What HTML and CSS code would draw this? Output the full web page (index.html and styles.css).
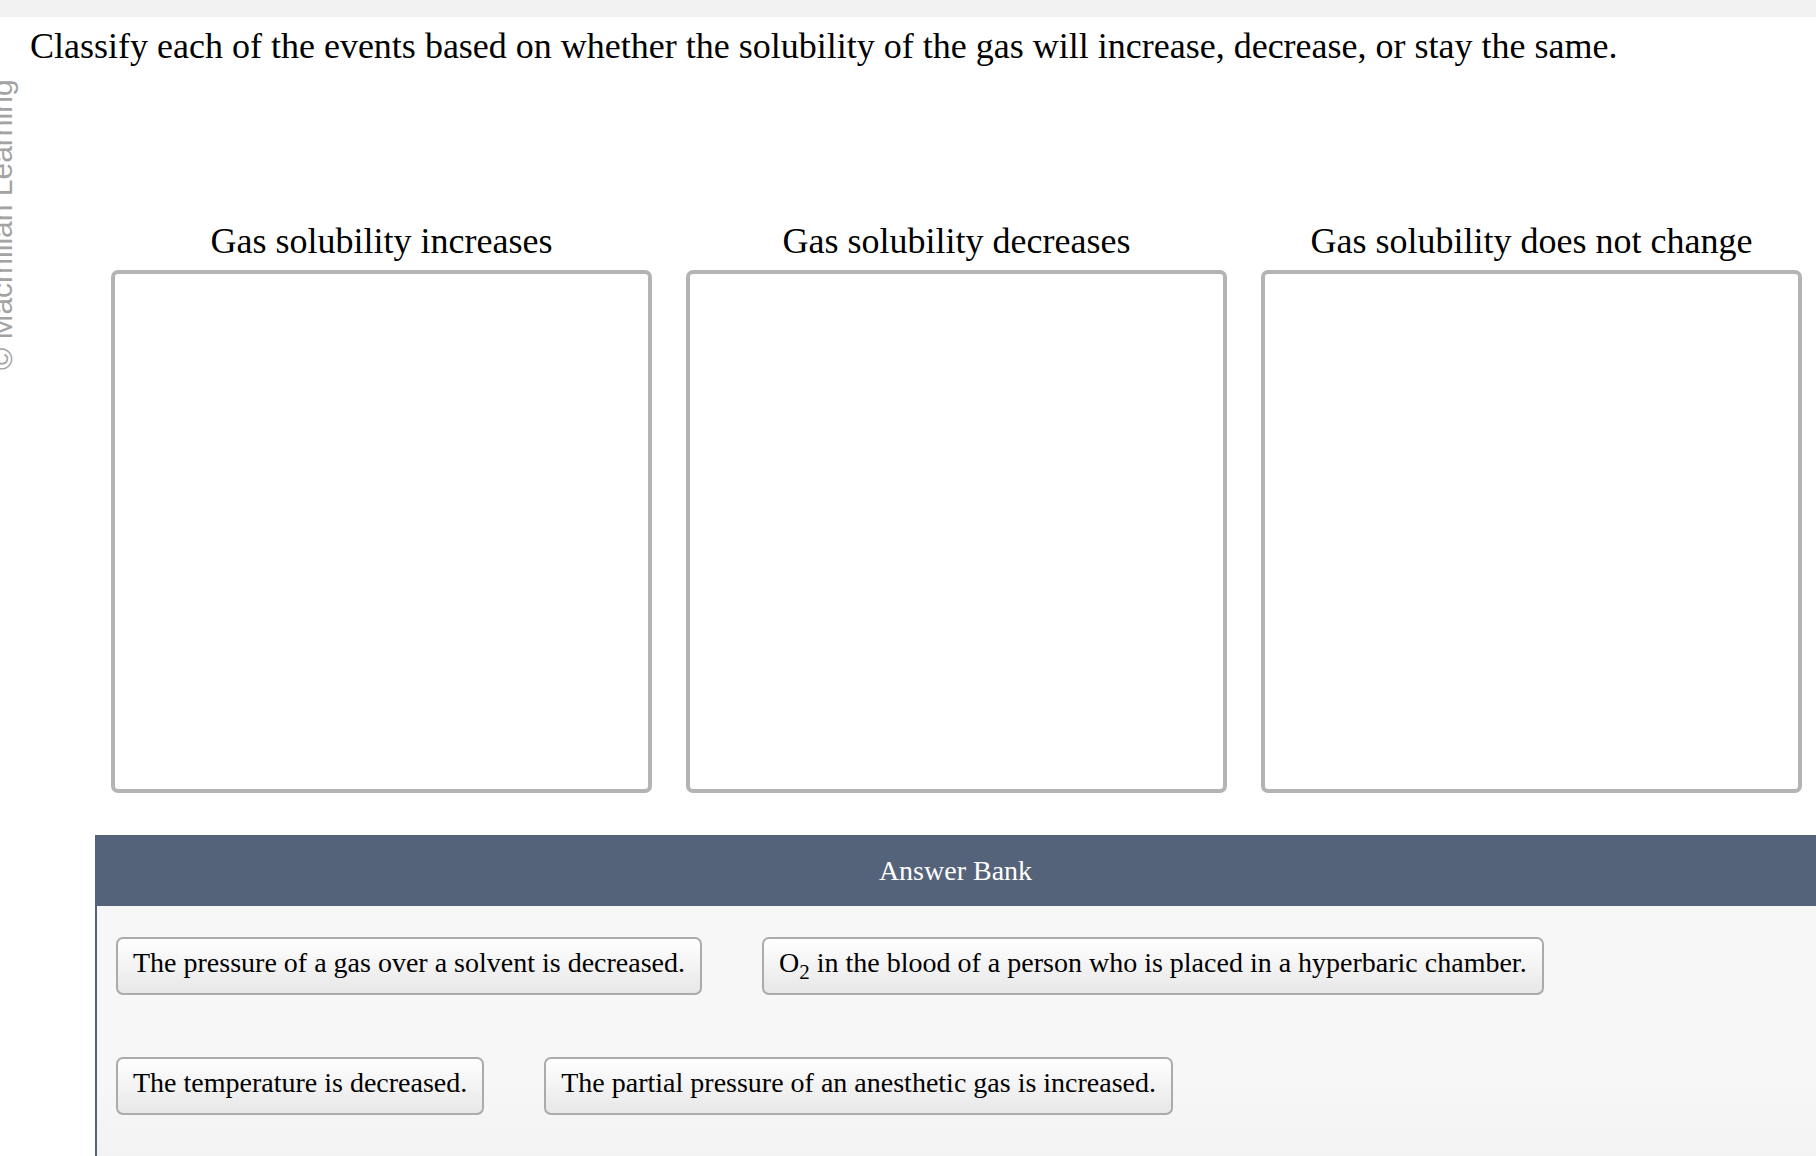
FILE: index.html
```html
<!DOCTYPE html>
<html lang="en">
<head>
<meta charset="utf-8">
<title>Gas solubility classification</title>
<link rel="stylesheet" href="styles.css">
</head>
<body>
<div class="topbar"></div>
<div class="watermark">© Macmillan Learning</div>
<main class="page">
  <h1 class="prompt">Classify each of the events based on whether the solubility of the gas will increase, decrease, or stay the same.</h1>
  <section class="bins">
    <div class="bin">
      <div class="bin-label">Gas solubility increases</div>
      <div class="bin-box"></div>
    </div>
    <div class="bin">
      <div class="bin-label">Gas solubility decreases</div>
      <div class="bin-box"></div>
    </div>
    <div class="bin">
      <div class="bin-label">Gas solubility does not change</div>
      <div class="bin-box"></div>
    </div>
  </section>
  <section class="bank">
    <div class="bank-head">Answer Bank</div>
    <div class="bank-body">
      <div class="chip">The pressure of a gas over a solvent is decreased.</div>
      <div class="chip">O<sub>2</sub> in the blood of a person who is placed in a hyperbaric chamber.</div>
      <div class="chip">The temperature is decreased.</div>
      <div class="chip">The partial pressure of an anesthetic gas is increased.</div>
    </div>
  </section>
</main>
</body>
</html>
```
FILE: styles.css
```css
html, body {
  margin: 0;
  padding: 0;
  background: #ffffff;
  overflow: hidden;
}
body {
  font-family: "Liberation Serif", "Times New Roman", serif;
  color: #000;
  position: relative;
  height: 1156px;
}
.topbar {
  height: 17px;
  background: #f2f2f2;
}
.watermark {
  position: absolute;
  left: 0;
  top: 0;
  font-family: "Liberation Sans", Arial, sans-serif;
  font-size: 30px;
  line-height: 30px;
  color: #a3a3a3;
  white-space: nowrap;
  transform-origin: 0 0;
  transform: translate(-13px, 370px) rotate(-90deg);
}
.page {
  display: flex;
  flex-direction: column;
}
.prompt {
  margin: 9px 0 0 30px;
  font-size: 36px;
  line-height: 41px;
  font-weight: normal;
}
.bins {
  display: grid;
  grid-template-columns: repeat(3, 541px);
  column-gap: 34px;
  margin: 154px 0 0 111px;
}
.bin {
  display: flex;
  flex-direction: column;
}
.bin-label {
  font-size: 36px;
  line-height: 41px;
  text-align: center;
  margin-bottom: 8px;
}
.bin-box {
  box-sizing: border-box;
  height: 523px;
  border: 4px solid #b4b4b4;
  border-radius: 7px;
  background: #fff;
}
.bank {
  margin: 42px 0 0 95px;
}
.bank-head {
  height: 71px;
  line-height: 71px;
  background: #54637a;
  color: #fff;
  font-size: 28px;
  text-align: center;
}
.bank-body {
  border-left: 2px solid #54637a;
  background: linear-gradient(#f7f7f7 0%, #f7f7f7 70%, #f3f3f3 100%);
  padding: 31px 0 38px 19px;
  display: flex;
  flex-wrap: wrap;
  row-gap: 62px;
  column-gap: 60px;
  height: 250px;
  box-sizing: border-box;
  align-content: flex-start;
}
.chip {
  border: 2px solid #ababab;
  border-radius: 7px;
  background: linear-gradient(#ffffff, #e7e7e7);
  font-size: 28px;
  line-height: 32px;
  padding: 8px 15px 14px;
  white-space: nowrap;
}
.chip sub {
  font-size: 21px;
  line-height: 0;
  vertical-align: -7px;
}
```
